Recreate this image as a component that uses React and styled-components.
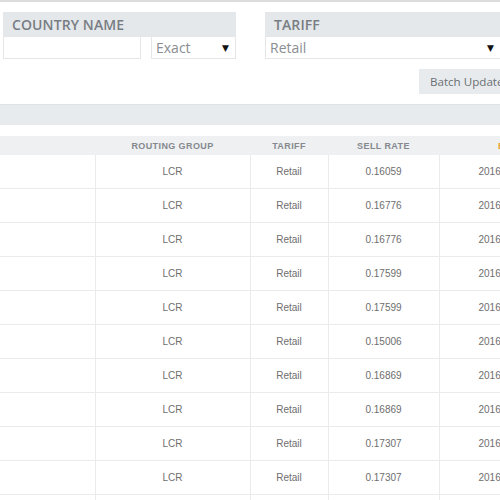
import React from 'react';
import styled, { createGlobalStyle } from 'styled-components';

const GlobalStyle = createGlobalStyle`
  html, body {
    margin: 0;
    padding: 0;
    background: #fff;
    overflow: hidden;
  }
  body {
    font-family: "Open Sans", "Liberation Sans", sans-serif;
  }
`;

const RATES = [
  '0.16059', '0.16776', '0.16776', '0.17599', '0.17599',
  '0.15006', '0.16869', '0.16869', '0.17307', '0.17307', '0.17307',
];

const Page = styled.div`
  width: 500px;
  height: 500px;
  overflow: hidden;
  border-top: 2px solid #dcdcdc;
  box-sizing: border-box;
`;

const Filters = styled.div`
  display: flex;
  padding: 10px 0 0 3px;
  gap: 29px;
`;

const FilterGroup = styled.div`
  width: ${({ $width }) => $width}px;
  flex-shrink: 0;
`;

const FilterLabel = styled.div`
  height: 25px;
  background: #e5e8eb;
  color: #787d83;
  font-weight: 600;
  font-size: 14px;
  line-height: 25px;
  padding-left: 9px;
  letter-spacing: 0.1px;
`;

const FilterRow = styled.div`
  display: flex;
  justify-content: space-between;
`;

const TextInput = styled.div`
  width: ${({ $width }) => $width}px;
  height: 22px;
  box-sizing: border-box;
  border: 1px solid #e6e6e6;
  border-top: none;
  background: #fff;
`;

const Select = styled.div`
  width: ${({ $width }) => $width}px;
  height: 22px;
  box-sizing: border-box;
  border: 1px solid #e6e6e6;
  border-top: none;
  background: #fff;
  display: flex;
  align-items: center;
  justify-content: space-between;
  padding: 0 6px 0 4px;
  color: #8a8d91;
  font-size: 14px;
`;

const Arrow = styled.span`
  color: #111;
  font-size: 9px;
  font-family: "DejaVu Sans", sans-serif;
`;

const Actions = styled.div`
  display: flex;
  padding: 10px 0 0 419px;
  height: 25px;
`;

const Button = styled.div`
  background: #e8ebee;
  color: #6c7075;
  font-size: 11.6px;
  line-height: 25px;
  padding: 0 11px;
  white-space: nowrap;
  flex-shrink: 0;
`;

const Bar = styled.div`
  margin-top: 10px;
  height: 20px;
  background: #e8ebee;
  border-top: 1px solid #e0e3e6;
`;

const Table = styled.table`
  margin-top: 11px;
  border-collapse: collapse;
  table-layout: fixed;
  width: 640px;
  font-family: "Liberation Sans", Arial, sans-serif;
`;

const HeadCell = styled.th`
  height: 19px;
  padding: 0;
  background: #eef0f2;
  color: ${({ $active }) => ($active ? '#f0a030' : '#85898e')};
  font-size: 9px;
  font-weight: bold;
  letter-spacing: 0.4px;
  text-align: ${({ $left }) => ($left ? 'left' : 'center')};
  padding-left: ${({ $left }) => ($left ? '59px' : '0')};
  white-space: nowrap;
  overflow: hidden;
`;

const Cell = styled.td`
  height: 33px;
  padding: 0;
  border-bottom: 1px solid #ebebeb;
  border-right: 1px solid #ebebeb;
  color: #6e6e6e;
  font-size: 10px;
  text-align: ${({ $left }) => ($left ? 'left' : 'center')};
  padding-left: ${({ $left }) => ($left ? '39px' : '0')};
  white-space: nowrap;
  overflow: hidden;
`;

export default function App() {
  return (
    <>
      <GlobalStyle />
      <Page>
        <Filters>
          <FilterGroup $width={233}>
            <FilterLabel>COUNTRY NAME</FilterLabel>
            <FilterRow>
              <TextInput $width={138} />
              <Select $width={85}>
                Exact
                <Arrow>▼</Arrow>
              </Select>
            </FilterRow>
          </FilterGroup>
          <FilterGroup $width={236}>
            <FilterLabel>TARIFF</FilterLabel>
            <Select $width={236}>
              Retail
              <Arrow>▼</Arrow>
            </Select>
          </FilterGroup>
        </Filters>
        <Actions>
          <Button>Batch Update</Button>
        </Actions>
        <Bar />
        <Table>
          <colgroup>
            <col style={{ width: 95 }} />
            <col style={{ width: 155 }} />
            <col style={{ width: 78 }} />
            <col style={{ width: 111 }} />
            <col style={{ width: 201 }} />
          </colgroup>
          <thead>
            <tr>
              <HeadCell />
              <HeadCell>ROUTING GROUP</HeadCell>
              <HeadCell>TARIFF</HeadCell>
              <HeadCell>SELL RATE</HeadCell>
              <HeadCell $active $left>EFFECTIVE DATE</HeadCell>
            </tr>
          </thead>
          <tbody>
            {RATES.map((rate, i) => (
              <tr key={i}>
                <Cell />
                <Cell>LCR</Cell>
                <Cell>Retail</Cell>
                <Cell>{rate}</Cell>
                <Cell $left>2016-06-24</Cell>
              </tr>
            ))}
          </tbody>
        </Table>
      </Page>
    </>
  );
}
